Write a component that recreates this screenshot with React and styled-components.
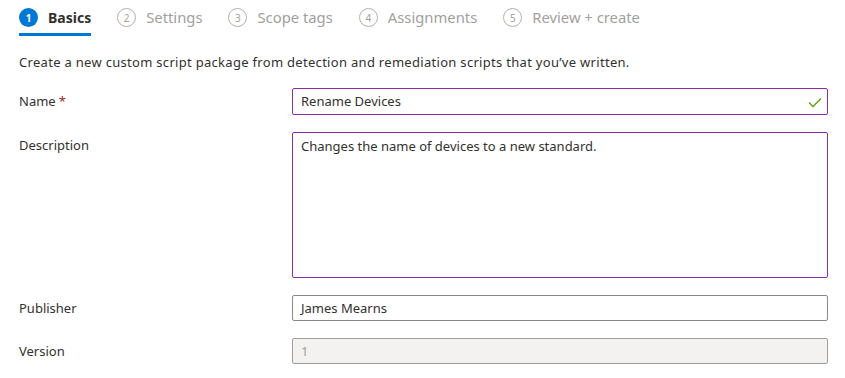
import React from 'react'
import styled, { createGlobalStyle } from 'styled-components'

const Global = createGlobalStyle`
  html, body {
    margin: 0;
    padding: 0;
    background: #ffffff;
  }
  body {
    font-family: 'Noto Sans', 'Open Sans', sans-serif;
    color: #323130;
  }
`

const Page = styled.div`
  width: 845px;
  height: 378px;
  padding: 0 17px 0 19px;
  box-sizing: border-box;
  overflow: hidden;
`

const Steps = styled.div`
  display: flex;
  align-items: flex-start;
  gap: 26px;
  height: 36px;
`

const Step = styled.div`
  display: flex;
  flex-direction: column;
  height: 36px;
  justify-content: space-between;
`

const StepHead = styled.div`
  display: flex;
  align-items: center;
  gap: 10px;
  padding-top: 8px;
`

const Circle = styled.span`
  width: 19px;
  height: 19px;
  box-sizing: border-box;
  border-radius: 50%;
  display: flex;
  align-items: center;
  justify-content: center;
  font-size: 10px;
  font-weight: ${(p) => (p.active ? 700 : 400)};
  background: ${(p) => (p.active ? '#0078d4' : 'transparent')};
  color: ${(p) => (p.active ? '#ffffff' : '#a19f9d')};
  border: ${(p) => (p.active ? 'none' : '1px solid #b3b0ad')};
`

const StepLabel = styled.span`
  font-size: ${(p) => (p.active ? 14 : 14.8)}px;
  line-height: 19px;
  font-weight: ${(p) => (p.active ? 700 : 400)};
  color: ${(p) => (p.active ? '#323130' : '#a19f9d')};
`

const Underline = styled.div`
  height: 3px;
  background: ${(p) => (p.active ? '#0078d4' : 'transparent')};
`

const Intro = styled.p`
  margin: 17px 0 0;
  font-size: 13px;
  letter-spacing: 0.3px;
  line-height: 18px;
`

const Form = styled.div`
  display: grid;
  grid-template-columns: 273px 1fr;
  row-gap: 17px;
  margin-top: 17px;
`

const Label = styled.div`
  font-size: 13px;
  line-height: 18px;
  padding-top: 4px;
`

const Required = styled.span`
  color: #a4262c;
  margin-left: 3px;
`

const Field = styled.div`
  position: relative;
  box-sizing: border-box;
  height: ${(p) => p.h || 27}px;
  border: 1px solid ${(p) => p.border || '#8a8886'};
  border-radius: 2px;
  background: ${(p) => (p.disabled ? '#f3f2f1' : '#ffffff')};
  color: ${(p) => (p.disabled ? '#a19f9d' : '#323130')};
  font-size: 13px;
  line-height: 18px;
  padding: 3px 8px;
`

const Check = styled.svg`
  position: absolute;
  right: 5px;
  top: 8px;
`

const steps = ['Basics', 'Settings', 'Scope tags', 'Assignments', 'Review + create']

export default function App() {
  return (
    <Page>
      <Global />
      <Steps>
        {steps.map((s, i) => (
          <Step key={s}>
            <StepHead>
              <Circle active={i === 0}>{i + 1}</Circle>
              <StepLabel active={i === 0}>{s}</StepLabel>
            </StepHead>
            <Underline active={i === 0} />
          </Step>
        ))}
      </Steps>
      <Intro>
        Create a new custom script package from detection and remediation scripts that you’ve written.
      </Intro>
      <Form>
        <Label>
          Name<Required>*</Required>
        </Label>
        <Field border="#8a2da5">
          Rename Devices
          <Check width="14" height="11" viewBox="0 0 14 11">
            <path d="M1 5.5 L5 9.5 L13 1.5" fill="none" stroke="#57a300" strokeWidth="1.3" />
          </Check>
        </Field>
        <Label>Description</Label>
        <Field border="#8a2da5" h={146} style={{ paddingTop: 4 }}>
          Changes the name of devices to a new standard.
        </Field>
        <Label>Publisher</Label>
        <Field h={26}>James Mearns</Field>
        <Label>Version</Label>
        <Field h={26} disabled border="#a19f9d">
          1
        </Field>
      </Form>
    </Page>
  )
}
